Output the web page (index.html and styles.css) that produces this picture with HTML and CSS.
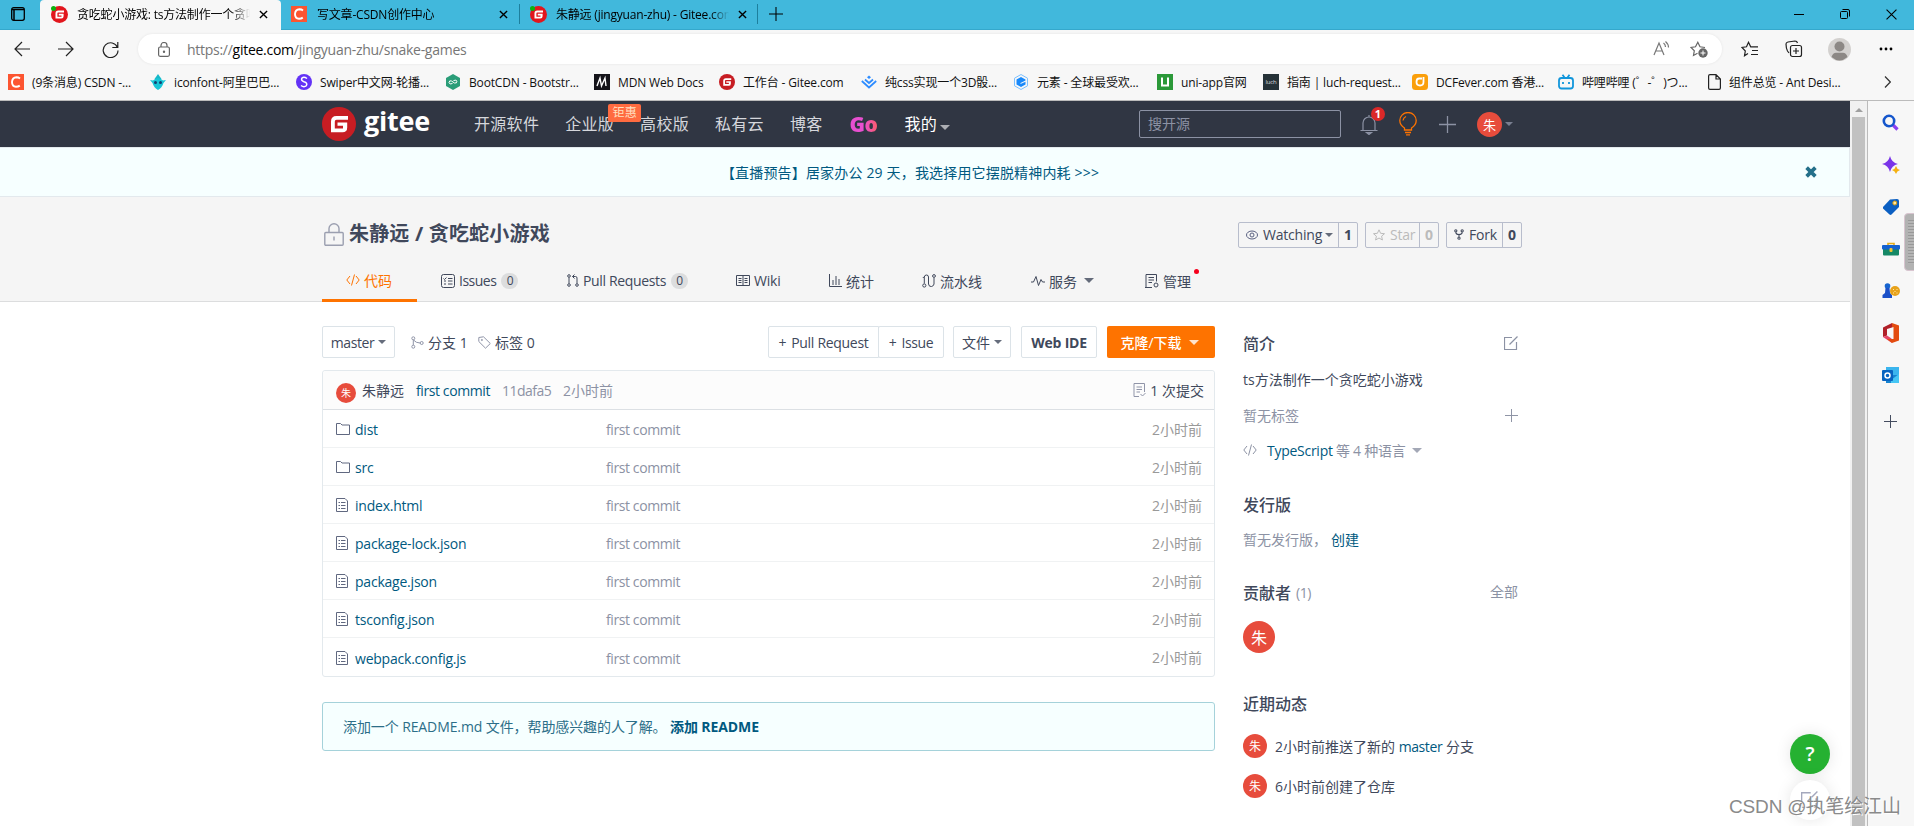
FILE: index.html
```
<!DOCTYPE html>
<html lang="zh-CN">
<head>
  <meta charset="UTF-8" />
  <title>贪吃蛇小游戏: ts方法制作一个贪吃蛇小游戏</title>
  <link rel="stylesheet" href="styles.css">
</head>
<body>
  <svg class="defs" width="0" height="0">
    <symbol id="i-gitee" viewBox="0 0 34 34">
      <circle cx="17" cy="17" r="17" fill="#c71d23"/>
      <path d="M26 9H14.5Q9 9 9 14.500V25.200H20.500Q25.200 25.200 25.200 20.500V15.500H15.500V18.800H21V21.500H12.800V14.500Q12.800 12.800 14.500 12.800H26Z" fill="#fff"/>
    </symbol>
    <symbol id="i-csdn" viewBox="0 0 16 16">
      <rect width="16" height="16" fill="#fc5531"/>
      <path d="M12 4.500Q10.500 3.300 8.500 3.300Q4.300 3.500 4 8Q4 12.600 8 12.700Q10.200 12.700 11.800 11.600" fill="none" stroke="#fff" stroke-width="1.900"/>
    </symbol>
    <symbol id="i-file" viewBox="0 0 12 14">
      <path d="M.5.500H9L11.500 3V13.500H.5ZM2.500 4.500H4M5 4.500H9.500M2.500 7.500H4M5 7.500H9.500M2.500 10.500H4M5 10.500H9.500" fill="none" stroke="currentColor"/>
    </symbol>
    <symbol id="i-folder" viewBox="0 0 14 12">
      <path d="M.5 11.500V.5H4.500L6 2H13.500V11.500Z" fill="none" stroke="currentColor"/>
    </symbol>
    <symbol id="i-close" viewBox="0 0 10 10">
      <path d="M1 1L9 9M9 1L1 9" fill="none" stroke="currentColor" stroke-width="1.500"/>
    </symbol>
    <symbol id="i-plus" viewBox="0 0 16 16">
      <path d="M8 0V16M0 8H16" fill="none" stroke="currentColor" stroke-width="1.200"/>
    </symbol>
    <symbol id="i-code" viewBox="0 0 14 12">
      <path d="M4 2L.8 6L4 10M10 2L13.200 6L10 10M8.500 .5L5.500 11.500" fill="none" stroke="currentColor"/>
    </symbol>
    <symbol id="i-edit" viewBox="0 0 14 14">
      <path d="M8 1.500H.5V13.500H12.500V6M5.500 8.500L13.500 .5" fill="none" stroke="currentColor" stroke-width="1.200"/>
    </symbol>
  </svg>

  <!-- tabs -->
  <div class="tabstrip">
    <div class="tab-menu"><svg width="14" height="14" viewBox="0 0 14 14"><rect x=".7" y=".7" width="12.600" height="12.600" rx="2" fill="none" stroke="#000" stroke-width="1.300"/><path d="M1 2.500H13M3 3V13" stroke="#000" stroke-width="1.500"/></svg></div>
    <div class="tab active">
      <span class="fav"><svg width="17" height="17"><use href="#i-gitee"/></svg><i></i></span>
      <span class="tab-title">贪吃蛇小游戏: ts方法制作一个贪吃蛇</span>
      <svg class="x" width="9" height="9"><use href="#i-close"/></svg>
    </div>
    <div class="tab">
      <span class="fav"><svg width="16" height="16"><use href="#i-csdn"/></svg></span>
      <span class="tab-title">写文章-CSDN创作中心</span>
      <svg class="x" width="9" height="9"><use href="#i-close"/></svg>
    </div>
    <div class="tab sep">
      <span class="fav"><svg width="17" height="17"><use href="#i-gitee"/></svg><i></i></span>
      <span class="tab-title">朱静远 (jingyuan-zhu) - Gitee.com</span>
      <svg class="x" width="9" height="9"><use href="#i-close"/></svg>
    </div>
    <div class="tab-new"><svg width="14" height="14"><use href="#i-plus"/></svg></div>
    <div class="win-btns">
      <svg width="10" height="10" viewBox="0 0 10 10"><path d="M0 5.500H10" stroke="#000"/></svg>
      <svg width="10" height="10" viewBox="0 0 10 10" fill="none" stroke="#000"><rect x=".5" y="2.500" width="7" height="7" rx="1"/><path d="M2.500 .5H8Q9.500 .5 9.500 2V7.500"/></svg>
      <svg width="11" height="11" viewBox="0 0 10 10"><path d="M.5 .5L9.500 9.500M9.500 .5L.5 9.500" stroke="#000"/></svg>
    </div>
  </div>

  <!-- address bar -->
  <div class="toolbar">
    <div class="nav-btns">
      <svg width="16" height="16" viewBox="0 0 16 16"><path d="M16 8H1M8 1L1 8L8 15"/></svg>
      <svg width="16" height="16" viewBox="0 0 16 16"><path d="M0 8H15M8 1L15 8L8 15"/></svg>
      <svg width="17" height="17" viewBox="0 0 17 17"><path d="M15.500 6.500A7.400 7.400 0 1 0 16 9.500M15.800 1V6.500H10.300"/></svg>
    </div>
    <div class="omnibox">
      <svg width="12" height="15" viewBox="0 0 12 15" fill="none" stroke="#666" stroke-width="1.200"><rect x=".6" y="5" width="10.800" height="9.300" rx="1.500"/><path d="M3 5V3.500A3 3 0 0 1 9 3.500V5"/><circle cx="6" cy="9.700" r=".6" fill="#666"/></svg>
      <span class="url">https://<b>gitee.com</b>/jingyuan-zhu/snake-games</span>
      <svg class="read" width="17" height="16" viewBox="0 0 17 16" fill="none" stroke="#777" stroke-width="1.200"><path d="M1 14L6 2L11 14M2.800 10H9.200M10.500 2Q12.500 3.500 12.500 6M12.500 .5Q15.500 3 15.500 6.500"/></svg>
      <svg width="18" height="17" viewBox="0 0 18 17"><path d="M7.500 12.300L3.500 14.500L4.300 9.800L1 6.500L5.500 5.800L7.800 1.300L10 5.800L15 6.500" fill="none" stroke="#666" stroke-width="1.200"/><circle cx="13" cy="12" r="4.700" fill="#666"/><path d="M13 9.500V14.500M10.500 12H15.500" stroke="#fff"/></svg>
    </div>
    <div class="tool-btns">
      <svg width="18" height="17" viewBox="0 0 18 17" fill="none" stroke="#222" stroke-width="1.200"><path d="M7 12.500L3.500 14.800L4.300 10L1 6.500L5.500 5.800L7.500 1.300L9.700 5.800L17 5.800M11 9.500H17M10 13.500H17"/></svg>
      <svg width="18" height="18" viewBox="0 0 18 18" fill="none" stroke="#222" stroke-width="1.200"><rect x="5.500" y="5.500" width="11" height="11" rx="2"/><path d="M11 8V14M8 11H14M4 13L2.500 11Q1 8 1 4Q1 2.500 3 2L10 1Q12 1 12.500 3"/></svg>
      <svg width="23" height="23" viewBox="0 0 23 23"><circle cx="11.500" cy="11.500" r="11.500" fill="#d3d1cf"/><circle cx="11.500" cy="8.500" r="5" fill="#8c8885"/><path d="M3.500 19Q5 14.800 8 14.800H15Q18 14.800 19.500 19Q11.500 26 3.500 19" fill="#8c8885"/></svg>
      <svg width="14" height="4" viewBox="0 0 14 4"><circle cx="2" cy="2" r="1.400"/><circle cx="7" cy="2" r="1.400"/><circle cx="12" cy="2" r="1.400"/></svg>
    </div>
  </div>

  <!-- bookmarks -->
  <div class="bookmarks">
    <a><svg width="16" height="16"><use href="#i-csdn"/></svg>(9条消息) CSDN -...</a>
    <a><svg width="16" height="16" viewBox="0 0 16 16"><path d="M8 0L11.500 5H4.500Z" fill="#16b8c8"/><path d="M0 6L3 6.500Q8 1.500 13 6.500L16 6L13.500 9Q12 14 8 16Q4 14 2.500 9Z" fill="#17c5d6"/><circle cx="5.500" cy="8.500" r="1.500" fill="#123f70"/><circle cx="10.500" cy="8.500" r="1.500" fill="#123f70"/></svg>iconfont-阿里巴巴...</a>
    <a><svg width="16" height="16" viewBox="0 0 16 16"><circle cx="8" cy="8" r="8" fill="#6332f6"/><path d="M11 4.500Q8 2.300 6 4Q4.500 6.500 8 7.800Q12 9 10.300 11.700Q8 13.700 5 11.500" fill="none" stroke="#fff" stroke-width="1.500"/></svg>Swiper中文网-轮播...</a>
    <a><svg width="16" height="16" viewBox="0 0 16 16"><path d="M8 0L15 4V12L8 16L1 12V4Z" fill="#2a9d78"/><path d="M7.500 9.500Q4.500 11 4 8.500Q4.300 6 6.500 7L9.500 9Q12 9.500 12 7.300Q11.500 5.500 8.500 6.500" fill="none" stroke="#fff"/></svg>BootCDN - Bootstr...</a>
    <a><svg width="16" height="16" viewBox="0 0 16 16"><rect width="16" height="16" fill="#15141a"/><path d="M3 12L6 4L7.500 12L11 4L12 12" fill="none" stroke="#fff" stroke-width="1.400"/></svg>MDN Web Docs</a>
    <a><svg width="16" height="16"><use href="#i-gitee"/></svg>工作台 - Gitee.com</a>
    <a><svg width="16" height="16" viewBox="0 0 16 16" fill="none" stroke="#2d8cff" stroke-width="1.700"><path d="M.8 7L8 13.500L15.200 7M4 5.500L8 9L12 5.500"/><path d="M8 1.500L10 3.300L8 5L6 3.300Z" fill="#2d8cff" stroke="none"/></svg>纯css实现一个3D骰...</a>
    <a><svg width="16" height="16" viewBox="0 0 16 16"><path d="M8 .5L14.500 4.200V11.800L8 15.500L1.500 11.800V4.200Z" fill="none" stroke="#7cc0ff"/><path d="M8 3L12.500 5.500V6.500L7.500 9V10L12.500 7.800V10.500L8 13L3.500 10.500V5.500Z" fill="#1989fa"/></svg>元素 - 全球最受欢...</a>
    <a><svg width="16" height="16" viewBox="0 0 16 16"><rect width="16" height="16" fill="#2b9939"/><path d="M5 3.500V11.500H11V3.500" fill="none" stroke="#fff" stroke-width="2"/></svg>uni-app官网</a>
    <a><span class="luch">luch</span>指南 | luch-request...</a>
    <a><svg width="16" height="16" viewBox="0 0 16 16"><rect width="16" height="16" rx="3.500" fill="#fa9f0b"/><path d="M10 4.500H7Q4.500 4.500 4.500 8Q4.500 11.500 8 11.500Q11.500 11.500 11.500 8V3" fill="none" stroke="#fff" stroke-width="1.800"/></svg>DCFever.com 香港...</a>
    <a><svg width="16" height="16" viewBox="0 0 16 16" fill="none" stroke="#1296db" stroke-width="1.800"><rect x="1" y="4" width="14" height="10.500" rx="2.500"/><path d="M4.500 .8L6.500 3.500M11.500 .8L9.500 3.500M5 8V10M11 8V10"/></svg>哔哩哔哩 (゜-゜)つ...</a>
    <a><svg width="13" height="16" viewBox="0 0 13 16" fill="none" stroke="#222" stroke-width="1.200"><path d="M2 .6H8L12.400 5V14Q12.400 15.400 11 15.400H2Q.6 15.400 .6 14V2Q.6 .6 2 .6M8 .6V5H12.400"/></svg>组件总览 - Ant Desi...</a>
    <svg class="more" width="7" height="12" viewBox="0 0 7 12"><path d="M1 .5L6.300 6L1 11.500" fill="none" stroke="#333" stroke-width="1.200"/></svg>
  </div>

  <div class="main">
    <div class="page">
      <div class="navbar">
        <svg class="logo" width="34" height="34"><use href="#i-gitee"/></svg>
        <span class="brand">gitee</span>
        <div class="menu">
          <a>开源软件</a>
          <a class="ent">企业版<em>钜惠</em></a>
          <a>高校版</a>
          <a>私有云</a>
          <a>博客</a>
          <a class="go">Go</a>
          <a class="mine">我的<i class="caret"></i></a>
        </div>
        <div class="search">搜开源</div>
        <div class="user-nav">
          <span class="bell"><svg width="18" height="21" viewBox="0 0 18 21" fill="none" stroke="#8c92a4" stroke-width="1.200"><path d="M.5 16.500H17.500M3 16V9A6 6 0 0 1 15 9V16M9 1V3"/><path d="M6.500 18.500H11.500L9 20.500Z" fill="#8c92a4"/></svg><b>1</b></span>
          <svg width="18" height="24" viewBox="0 0 18 24" fill="none" stroke="#fe7300" stroke-width="1.300"><path d="M5.500 18V16Q.8 13 .8 8.500A8.200 8 0 0 1 17.200 8.500Q17.200 13 12.500 16V18ZM6 20.500H12M7 22.800H11M4 8.500Q4.500 5.500 7 4.500"/></svg>
          <svg class="add" width="17" height="17"><use href="#i-plus"/></svg>
          <span class="avatar a25">朱</span><i class="caret"></i>
        </div>
      </div>

      <div class="notice"><span>【直播预告】居家办公 29 天，我选择用它摆脱精神内耗 &gt;&gt;&gt;</span>
        <svg width="12" height="12" viewBox="0 0 11 11"><path d="M1.500 1.500L9.500 9.500M9.500 1.500L1.500 9.500" stroke="#24708a" stroke-width="3.400"/></svg>
      </div>

      <div class="repo-head">
        <div class="repo-title">
          <svg width="20" height="23" viewBox="0 0 20 23" fill="none" stroke="#9b9fb0" stroke-width="1.400"><rect x=".8" y="9.500" width="18.400" height="12.700" rx="1"/><path d="M5 9.500V5.500A5 4.700 0 0 1 15 5.500V9.500M10 13.500V17.500"/></svg>
          <h2>朱静远 / 贪吃蛇小游戏</h2>
          <div class="counts">
            <span class="cnt watch"><span><svg width="12" height="10" viewBox="0 0 12 10" fill="none" stroke="#596080"><ellipse cx="6" cy="5" rx="5.500" ry="4"/><circle cx="6" cy="5" r="2"/></svg>Watching<i class="caret"></i></span><b>1</b></span>
            <span class="cnt star"><span><svg width="12" height="12" viewBox="0 0 12 12" fill="none" stroke="#bbb"><path d="M6 .8L7.600 4.300L11.500 4.700L8.600 7.200L9.400 11L6 9L2.600 11L3.400 7.200L.5 4.700L4.400 4.300Z"/></svg>Star</span><b>0</b></span>
            <span class="cnt fork"><span><svg width="10" height="11" viewBox="0 0 11 12" fill="none" stroke="#40485b" stroke-width="1.200"><circle cx="2" cy="2" r="1.200"/><circle cx="9" cy="2" r="1.200"/><circle cx="5.500" cy="10" r="1.200"/><path d="M2 3.500Q2 6 5.500 6Q9 6 9 3.500M5.500 6V8.500"/></svg>Fork</span><b>0</b></span>
          </div>
        </div>
        <div class="repo-tabs">
          <a class="on t1"><svg width="14" height="12"><use href="#i-code"/></svg>代码</a>
          <a class="t2"><svg width="14" height="14" viewBox="0 0 14 14"><rect x=".5" y=".5" width="13" height="13" rx="2"/><path d="M2.500 4.500L3.500 5.500L5.500 3.500M7 4.500H11.500M3 7H5M7 7H11.500M3 10H5M7 10H11.500"/></svg>Issues<em>0</em></a>
          <a class="t3"><svg width="12" height="13" viewBox="0 0 12 13"><circle cx="2" cy="2" r="1.300"/><circle cx="2" cy="11" r="1.300"/><circle cx="10" cy="11" r="1.300"/><path d="M2 3.500V9.500M5.500 2.500H8.500Q10 2.500 10 4V9.500M7.500 .5L5.500 2.500L7.500 4.500"/></svg>Pull Requests<em>0</em></a>
          <a class="t4"><svg width="14" height="11" viewBox="0 0 14 11"><path d="M.5 .5H13.500V10.500H.5ZM7 .5V10.500M2.500 3.500H5.500M2.500 5.500H5.500M2.500 7.500H5.500M8.500 3.500H11.500M8.500 5.500H11.500M8.500 7.500H11.500"/></svg>Wiki</a>
          <a class="t5"><svg width="13" height="13" viewBox="0 0 13 13"><path d="M.5 0V12.500H13M4 11V6M7 11V2M10 11V5"/></svg>统计</a>
          <a class="t6"><svg width="14" height="14" viewBox="0 0 14 14"><circle cx="2.300" cy="11.500" r="1.600"/><circle cx="12" cy="2" r="1.400"/><path d="M2.300 9.500V3Q2.500 1 4.500 1Q6.500 1 6.500 3V10Q7 13 9.500 12.500Q11.800 12 12 10V4M.8 4L2.300 2.500"/></svg>流水线</a>
          <a class="t7"><svg width="14" height="12" viewBox="0 0 14 12"><path d="M0 7H2.500L5 1.500L7.500 10.500L10 4.500L11.500 7H14"/></svg>服务<i class="caret big"></i></a>
          <a class="t8"><svg width="14" height="14" viewBox="0 0 14 14"><path d="M7 13.500H1V.5H11.500V7.500M3.500 3.500H9M3.500 6H9M3.500 8.500H7M0 13.500H7"/><circle cx="11" cy="11" r="2"/></svg>管理<i class="dot"></i></a>
        </div>
      </div>

      <div class="content">
        <div class="left">
          <div class="actions">
            <span class="btn master">master<i class="caret"></i></span>
            <span class="lnk br"><svg width="13" height="13" viewBox="0 0 13 13"><circle cx="2.300" cy="2.300" r="1.500"/><circle cx="2.300" cy="10.700" r="1.500"/><circle cx="10.700" cy="7" r="1.500"/><path d="M2.300 4V9M2.500 4Q5 7 9 7"/></svg>分支 1</span>
            <span class="lnk tg"><svg width="13" height="13" viewBox="0 0 13 13"><path d="M.8 1.500L5.500 .8L12.300 7.500L7.500 12.200L.8 5.500Z"/><circle cx="3.900" cy="4" r=".6"/></svg>标签 0</span>
            <span class="group"><span class="btn pr"><i>+</i>Pull Request</span><span class="btn is"><i>+</i>Issue</span></span>
            <span class="btn fl">文件<i class="caret"></i></span>
            <span class="btn ide">Web IDE</span>
            <span class="btn clone">克隆/下载<i class="caret big"></i></span>
          </div>

          <div class="files">
            <div class="commit">
              <span class="avatar a20">朱</span>
              <span class="who">朱静远</span>
              <a>first commit</a>
              <span class="hash">11dafa5</span>
              <span class="ago">2小时前</span>
              <span class="total"><svg width="13" height="14" viewBox="0 0 13 14"><path d="M6 13.500H1V.5H11.500V9M3.500 4H9M3.500 6.500H9M3.500 9H7M7.500 11L9.500 13L12.500 10"/></svg>1 次提交</span>
            </div>
            <div class="row"><svg width="14" height="12"><use href="#i-folder"/></svg><a>dist</a><span>first commit</span><time>2小时前</time></div>
            <div class="row"><svg width="14" height="12"><use href="#i-folder"/></svg><a>src</a><span>first commit</span><time>2小时前</time></div>
            <div class="row"><svg width="12" height="14"><use href="#i-file"/></svg><a>index.html</a><span>first commit</span><time>2小时前</time></div>
            <div class="row"><svg width="12" height="14"><use href="#i-file"/></svg><a>package-lock.json</a><span>first commit</span><time>2小时前</time></div>
            <div class="row"><svg width="12" height="14"><use href="#i-file"/></svg><a>package.json</a><span>first commit</span><time>2小时前</time></div>
            <div class="row"><svg width="12" height="14"><use href="#i-file"/></svg><a>tsconfig.json</a><span>first commit</span><time>2小时前</time></div>
            <div class="row"><svg width="12" height="14"><use href="#i-file"/></svg><a>webpack.config.js</a><span>first commit</span><time>2小时前</time></div>
          </div>

          <div class="readme">添加一个 README.md 文件，帮助感兴趣的人了解。 <b>添加 README</b></div>
        </div>

        <div class="right">
          <h3>简介<svg width="14" height="14"><use href="#i-edit"/></svg></h3>
          <p class="desc">ts方法制作一个贪吃蛇小游戏</p>
          <p class="tags">暂无标签<svg width="13" height="13"><use href="#i-plus"/></svg></p>
          <p class="lang"><svg width="14" height="12"><use href="#i-code"/></svg><span><a>TypeScript</a> 等 4 种语言</span><i class="caret big"></i></p>
          <h3 class="rel">发行版</h3>
          <p class="norel">暂无发行版， <a>创建</a></p>
          <h3 class="con">贡献者 <small>(1)</small><span>全部</span></h3>
          <span class="avatar a32">朱</span>
          <h3 class="act">近期动态</h3>
          <p class="event"><span class="avatar a24">朱</span><span>2小时前推送了新的 <a>master</a> 分支</span></p>
          <p class="event"><span class="avatar a24">朱</span><span>6小时前创建了仓库</span></p>
        </div>
      </div>

      <div class="help">?</div>
      <div class="feedback"><svg width="17" height="17"><use href="#i-edit"/></svg></div>
    </div>

    <div class="scrollbar"><i></i><div></div></div>

    <div class="sidebar">
      <svg width="18" height="18" viewBox="0 0 18 18"><path d="M11 11L15.500 15.500" stroke="#8a3ff0" stroke-width="3.200"/><circle cx="7" cy="7" r="5.200" fill="none" stroke="#1556cc" stroke-width="2.600"/></svg>
      <svg width="18" height="18" viewBox="0 0 18 18"><path d="M8 0Q9.500 6.500 16 8Q9.500 9.500 8 16Q6.500 9.500 0 8Q6.500 6.500 8 0" fill="#7a34e8"/><path d="M14 10Q14.800 13.200 18 14Q14.800 14.800 14 18Q13.200 14.800 10 14Q13.200 13.200 14 10" fill="#f5b111"/></svg>
      <svg width="18" height="18" viewBox="0 0 18 18"><path d="M1 9L8 1.500L15 1Q17 1 17 3V9L9.500 16.500Q8.500 17.300 7.500 16.500L1 10.500Z" fill="#0b5fc2"/><circle cx="12.800" cy="5" r="2" fill="#ffe9a0" stroke="#d99a0c"/></svg>
      <svg width="18" height="18" viewBox="0 0 18 18"><path d="M6 6V3.500H12V6" fill="none" stroke="#e5ac1a" stroke-width="1.600"/><rect x="1" y="8" width="16" height="7.500" rx="1" fill="#158866"/><rect y="5" width="18" height="4.500" rx="1" fill="#1562d0"/><rect x="7.500" y="8" width="3" height="4" rx="1" fill="#f3c331"/></svg>
      <svg width="18" height="18" viewBox="0 0 18 18"><circle cx="5.500" cy="4" r="2.800" fill="#1664cf"/><path d="M3.500 6H7.500L8 11L10 13V16H.5V13L3 11Z" fill="#1b50c8"/><circle cx="13" cy="9" r="5" fill="#e7a21b"/><path d="M11 7.500H12M14.500 7.500H15.500M12.500 9.500H13.500M11 11H12M14.500 11H15.500" stroke="#ffeaa8" stroke-width="1.200"/></svg>
      <svg width="18" height="20" viewBox="0 0 18 20"><path d="M10 0L1 4.500V14L5 12.500V6L10 4.500Z" fill="#b02028"/><path d="M1 14L5 12.500L9.500 15.500L10 20Z" fill="#e64566"/><path d="M10 0L17 2.500V17.500L10 20L5 16H11.500V4L10 4.500Z" fill="#e34c10"/></svg>
      <svg width="18" height="18" viewBox="0 0 18 18"><rect x="4" y="1" width="13" height="8" fill="#3bb5ee"/><path d="M4 9H17V17H4Z" fill="#1683d0"/><path d="M9 14L17 8V17H9Z" fill="#46c6f4"/><rect x="0" y="4" width="11" height="11" rx="1" fill="#0864c0"/><circle cx="5.500" cy="9.500" r="2.500" fill="none" stroke="#fff" stroke-width="1.500"/></svg>
      <svg class="side-add" width="13" height="13"><use href="#i-plus"/></svg>
    </div>
    <div class="handle"></div>
    <div class="watermark">CSDN @执笔绘江山</div>
  </div>
</body>
</html>
```
FILE: styles.css
```
* {
  box-sizing: border-box;
}

body {
  margin: 0;
  width: 1914px;
  height: 826px;
  overflow: hidden;
  background: #f7f7f7;
  font-family: "Open Sans", "Noto Sans CJK SC", sans-serif;
  font-size: 14px;
  color: #40485b;
}

h2, h3, p {
  margin: 0;
}

svg {
  display: block;
  flex: none;
}

em, i {
  font-style: normal;
}

a {
  color: #005980;
}

.defs {
  position: absolute;
}

.caret {
  display: inline-block;
  border: 4px solid transparent;
  border-top-color: currentColor;
  border-bottom: 0;
  opacity: 0.8;
}

.caret.big {
  border-width: 5px 5px 0;
}

.avatar {
  flex: none;
  display: flex;
  align-items: center;
  justify-content: center;
  border-radius: 50%;
  background: #e74c3c;
  color: #fff;
}

.a20 { width: 20px; height: 20px; font-size: 10px; }
.a24 { width: 24px; height: 24px; font-size: 12px; }
.a25 { width: 25px; height: 25px; font-size: 13px; }
.a32 { width: 32px; height: 32px; font-size: 16px; }

/* browser chrome */
.tabstrip {
  display: flex;
  height: 30px;
  background: #41b8dc;
  border-bottom: 1px solid #35a8cc;
  color: #000;
  font-size: 12px;
}

.tab-menu {
  width: 40px;
  padding: 7px 0 0 11px;
}

.tab {
  display: flex;
  align-items: center;
  width: 239px;
  height: 28px;
  padding-left: 10px;
}

.tab.active {
  width: 241px;
  height: 30px;
  padding: 0 0 2px 11px;
  background: #f7f7f7;
  border-radius: 4px 4px 0 0;
}

.tab.sep {
  height: 20px;
  margin: 4px 0 0 -1px;
  border-left: 1px solid #1d7f9d;
  border-right: 1px solid #1d7f9d;
}

.fav {
  position: relative;
  width: 26px;
}

.fav i {
  position: absolute;
  left: 0;
  top: 0;
  width: 5px;
  height: 5px;
  border-radius: 50%;
  background: #0bb20c;
}

.fav use[href="#i-gitee"] {
  filter: saturate(1.2);
}

.tab-title {
  width: 173px;
  overflow: hidden;
  white-space: nowrap;
  letter-spacing: -0.2px;
  -webkit-mask-image: linear-gradient(to right, #000 155px, transparent 173px);
  mask-image: linear-gradient(to right, #000 155px, transparent 173px);
}

.tab .x {
  margin-left: 9px;
}

.tab-new {
  padding: 7px 0 0 11px;
}

.win-btns {
  display: flex;
  gap: 36px;
  margin: 9px 17px 0 auto;
}

.toolbar {
  display: flex;
  align-items: center;
  height: 38px;
}

.nav-btns {
  display: flex;
  gap: 28px;
  width: 138px;
  padding-left: 14px;
  fill: none;
  stroke: #222;
  stroke-width: 1.2;
}

.omnibox {
  display: flex;
  align-items: center;
  width: 1584px;
  height: 30px;
  padding: 0 14px 0 20px;
  border-radius: 15px;
  background: #fff;
  box-shadow: 0 0 3px rgba(0, 0, 0, 0.08);
}

.url {
  margin-left: 17px;
  font-size: 14px;
  letter-spacing: -0.27px;
  color: #767676;
}

.url b {
  font-weight: 400;
  color: #000;
}

.read {
  margin: 0 20px 0 auto;
}

.tool-btns {
  display: flex;
  align-items: center;
  gap: 26px;
  padding-left: 19px;
}

.tool-btns svg:nth-child(3) {
  margin-left: -1px;
}

.tool-btns svg:nth-child(4) {
  margin-left: 2px;
}

.bookmarks {
  display: grid;
  grid-template-columns: 142px 146px 149px 149px 125px 142px 152px 144px 106px 149px 146px 150px 176px auto;
  align-items: center;
  height: 32px;
  padding: 0 0 4px 8px;
  font-size: 12px;
}

.bookmarks a {
  display: flex;
  align-items: center;
  gap: 8px;
  color: #111;
  white-space: nowrap;
  letter-spacing: -0.15px;
}

.luch {
  width: 16px;
  background: #263238;
  color: #ddd;
  font-size: 6px;
  line-height: 16px;
  text-align: center;
}

/* page */
.main {
  position: relative;
  display: flex;
  height: 726px;
  border-top: 1px solid #bbb;
}

.page {
  position: relative;
  width: 1850px;
  height: 725px;
  background: #fff;
}

.navbar {
  display: flex;
  align-items: center;
  height: 46px;
  padding-left: 322px;
  background: #303643;
}

.brand {
  width: 118px;
  padding: 0 0 7px 8px;
  font-size: 27px;
  font-weight: 700;
  line-height: 36px;
  letter-spacing: -0.2px;
  color: #fff;
}

.menu {
  display: flex;
  width: 665px;
  font-size: 16px;
  line-height: 24px;
  letter-spacing: 0.3px;
}

.menu a {
  margin-right: 26px;
  color: #d5d7dc;
}

.menu .ent {
  position: relative;
}

.menu .ent em {
  position: absolute;
  left: 43px;
  top: -8px;
  z-index: 1;
  width: 33px;
  background: #ff6b40;
  border-radius: 2px;
  color: #ffe0c0;
  font-size: 12px;
  line-height: 18px;
  text-align: center;
}

.menu .go {
  width: 30px;
  padding-left: 1px;
  font-size: 21px;
  font-weight: 800;
  letter-spacing: -0.5px;
  background: linear-gradient(to right, #e84fd0 50%, #ff5e5e);
  -webkit-background-clip: text;
  background-clip: text;
  color: transparent;
}

.menu .mine {
  color: #fff;
}

.mine .caret {
  margin-left: 3px;
  border-width: 5px 5px 0;
  vertical-align: 0;
  opacity: 0.6;
}

.search {
  width: 202px;
  height: 28px;
  padding-left: 8px;
  border: 1px solid #8c92a4;
  border-radius: 2px;
  font-size: 14px;
  line-height: 26px;
  color: #8c92a4;
}

.user-nav {
  display: flex;
  align-items: center;
  padding-left: 19px;
  color: #8c92a4;
}

.bell {
  position: relative;
  margin-right: 21px;
}

.bell b {
  position: absolute;
  left: 11px;
  top: -7px;
  width: 14px;
  height: 14px;
  border-radius: 50%;
  background: #db2828;
  color: #fff;
  font-size: 11px;
  line-height: 14px;
  text-align: center;
}

.add {
  margin: 0 21px 0 22px;
}

.user-nav .caret {
  margin-left: 3px;
}

.notice {
  display: flex;
  align-items: center;
  height: 50px;
  border: 1px solid #e3e9ed;
  border-left: 0;
  background: #f6ffff;
  color: #005980;
}

.notice span {
  width: 1805px;
  padding-left: 15px;
  letter-spacing: 0.17px;
  text-align: center;
}

.repo-head {
  height: 105px;
  padding: 22px 0 0 322px;
  background: #f5f5f5;
  border-bottom: 1px solid #dcddde;
}

.repo-title {
  display: flex;
  align-items: center;
  width: 1200px;
  height: 30px;
  padding-left: 2px;
}

.repo-title h2 {
  margin-left: 5px;
  font-size: 20px;
  line-height: 28px;
  letter-spacing: 0.18px;
}

.counts {
  display: flex;
  gap: 7px;
  margin: 1px 0 0 auto;
}

.cnt {
  display: flex;
  height: 26px;
  border: 1px solid #b8bdcc;
  border-radius: 2px;
  line-height: 24px;
}

.cnt > span {
  display: flex;
  flex: 1;
  align-items: center;
  gap: 5px;
  padding-left: 7px;
  letter-spacing: -0.2px;
}

.cnt .caret {
  margin-left: -2px;
}

.cnt b {
  width: 19px;
  border-left: 1px solid #b8bdcc;
  text-align: center;
}

.watch { width: 120px; }
.star { width: 74px; color: #bbb; }
.fork { width: 76px; }

.repo-tabs {
  display: flex;
  height: 52px;
}

.repo-tabs a {
  display: flex;
  align-items: center;
  height: 54px;
  padding-top: 9px;
  gap: 4px;
  color: #40485b;
  white-space: nowrap;
}

.repo-tabs svg {
  fill: none;
  stroke: currentColor;
}

.repo-tabs .on {
  padding-top: 12px;
  height: 53px;
  border-bottom: 3px solid #fe7300;
  color: #fe7300;
}

.t1 { width: 95px; padding-left: 24px; }
.t2 { width: 150px; padding-left: 24px; letter-spacing: -0.5px; }
.t3 { width: 169px; letter-spacing: -0.35px; }
.t4 { width: 93px; letter-spacing: -0.2px; }
.t5 { width: 93px; }
.t6 { width: 109px; }
.t7 { width: 114px; }
.t8 { position: relative; }

.repo-tabs em {
  width: 17px;
  height: 16px;
  margin-left: 1px;
  border-radius: 8px;
  background: #dcddde;
  font-size: 12px;
  line-height: 16px;
  text-align: center;
}

.t7 .caret {
  margin-left: 3px;
}

.dot {
  position: absolute;
  right: -8px;
  top: 20px;
  width: 5px;
  height: 5px;
  border-radius: 50%;
  background: #f5001d;
}

.content {
  display: flex;
  padding: 24px 0 0 322px;
}

.left {
  width: 893px;
}

.actions {
  display: flex;
  align-items: center;
  height: 32px;
  margin-bottom: 12px;
}

.btn {
  display: flex;
  align-items: center;
  justify-content: center;
  gap: 4px;
  height: 32px;
  border: 1px solid #dce3e8;
  border-radius: 2px;
  white-space: nowrap;
}

.master { width: 73px; margin-right: 16px; letter-spacing: -0.4px; }
.group { display: flex; margin: 0 9px 0 auto; }
.pr { width: 111px; gap: 5px; letter-spacing: -0.3px; border-radius: 2px 0 0 2px; }
.is { width: 66px; gap: 5px; margin-left: -1px; letter-spacing: -0.4px; }
.fl { width: 58px; margin-right: 10px; }
.ide { width: 76px; margin-right: 10px; font-weight: 700; letter-spacing: -0.2px; }

.clone {
  width: 108px;
  gap: 7px;
  padding-right: 3px;
  border: 0;
  background: #fe7300;
  color: #fff;
  font-weight: 500;
}

.lnk {
  display: flex;
  align-items: center;
  gap: 4px;
}

.lnk svg, .total svg {
  fill: none;
  stroke: #9095a8;
}

.br {
  width: 67px;
}

.files {
  border: 1px solid #e3e9ed;
  border-radius: 3px;
}

.commit {
  display: flex;
  align-items: center;
  height: 39px;
  padding: 0 10px 0 13px;
  background: #fcfcfc;
  border-bottom: 1px solid #dce0e4;
  border-radius: 3px 3px 0 0;
}

.commit .avatar { margin: 5px 6px 0 0; }
.who { width: 54px; }
.commit a { width: 86px; letter-spacing: -0.4px; }
.hash { width: 61px; color: #8c92a4; letter-spacing: -0.5px; }
.ago { color: #8c92a4; }

.total {
  display: flex;
  align-items: center;
  gap: 4px;
  margin-left: auto;
}

.row {
  display: flex;
  align-items: center;
  height: 38px;
  padding: 0 12px 0 13px;
  border-bottom: 1px solid #f0f2f3;
  color: #8c92a4;
}

.row:last-child {
  border-bottom: 0;
}

.row svg {
  margin: 1px 5px 0 0;
  color: #606880;
}

.row svg[width="12"] {
  margin-right: 7px;
}

.row a {
  width: 251px;
  margin-top: 2px;
  letter-spacing: -0.22px;
}

.row span {
  margin-top: 2px;
  letter-spacing: -0.4px;
}

.row time {
  margin-left: auto;
  color: #999;
}

.readme {
  height: 49px;
  margin-top: 25px;
  padding-left: 20px;
  border: 1px solid #a5d2da;
  border-radius: 3px;
  background: #f6ffff;
  color: #2c6e88;
  line-height: 47px;
  letter-spacing: -0.1px;
}

.readme b {
  margin-left: 0;
  color: #005980;
}

.right {
  width: 275px;
  margin-left: 28px;
}

.right h3 {
  display: flex;
  align-items: center;
  height: 24px;
  margin-top: 5px;
  font-size: 16px;
  font-weight: 500;
}

.right h3 svg, .tags svg, .con span {
  margin-left: auto;
}

.right svg {
  color: #8c92a4;
}

.right p {
  display: flex;
  align-items: center;
  height: 20px;
}

.right .desc { margin-top: 14px; }
.right .tags { margin-top: 16px; color: #8c92a4; }
.right .lang { margin-top: 15px; color: #8c92a4; }
.lang span { margin: 0 7px 0 10px; letter-spacing: -0.27px; }
.right .rel { margin-top: 32px; }
.right .norel { margin-top: 13px; color: #8c92a4; }
.norel a { margin-left: 4px; }
.right .con { margin: 31px 0 17px; }
.con small { margin-left: 5px; font-size: 14px; letter-spacing: -0.5px; color: #8c92a4; }
.con span { margin-bottom: 2px; font-size: 14px; font-weight: 400; color: #8c92a4; }
.right .act { margin: 38px 0 19px; }

.right .event {
  height: 24px;
  margin-bottom: 16px;
  gap: 8px;
}

.event a {
  letter-spacing: -0.4px;
}

.help, .feedback {
  position: absolute;
  left: 1790px;
  top: 633px;
  width: 40px;
  height: 40px;
  border-radius: 50%;
  background: #25b131;
  box-shadow: 0 0 16px rgba(0, 0, 0, 0.1);
  color: #fff;
  font-size: 20px;
  font-weight: 600;
  line-height: 40px;
  text-align: center;
}

.feedback {
  top: 679px;
  padding: 11px;
  background: #fff;
  color: #a4a8bd;
}

.scrollbar {
  width: 18px;
  padding: 7px 2px 0;
  background: #f1f1f1;
  border-right: 1px solid #bbb;
}

.scrollbar i {
  display: block;
  margin: 0 3px 5px;
  border: 4px solid transparent;
  border-top: 0;
  border-bottom-color: #a0a0a0;
}

.scrollbar div {
  width: 13px;
  height: 710px;
  background: #c1c1c1;
}

.sidebar {
  display: flex;
  flex-direction: column;
  align-items: center;
  gap: 24px;
  width: 46px;
  padding-top: 13px;
}

.sidebar svg:nth-child(6) {
  margin: -1px 0;
}

.side-add {
  margin: 7px 2px 0 0;
}

.handle {
  position: absolute;
  left: 1904px;
  top: 112px;
  width: 14px;
  height: 58px;
  border: 1px solid #d9c5d0;
  border-radius: 4px;
  background: repeating-linear-gradient(#999 0 1px, #b5b5b5 1px 3px) 3px 6px / 6px 44px no-repeat #b2b2b2;
}

.watermark {
  position: absolute;
  left: 1729px;
  top: 692px;
  font-family: "Liberation Sans", "Noto Sans CJK SC", sans-serif;
  font-size: 19px;
  line-height: 28px;
  letter-spacing: -0.15px;
  color: #8a8a8a;
  text-shadow: 1px 1px 0 #fff;
  white-space: nowrap;
}
```
